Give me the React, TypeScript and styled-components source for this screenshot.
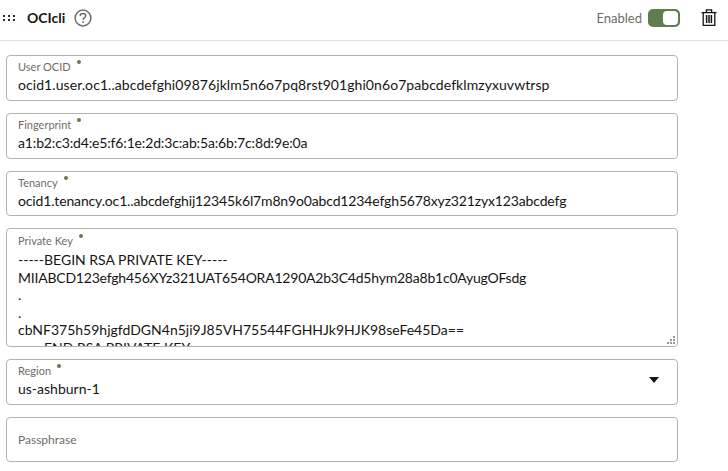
import React from "react";
import styled, { createGlobalStyle } from "styled-components";

const GlobalStyle = createGlobalStyle`
  html, body {
    margin: 0;
    padding: 0;
    background: #fff;
    overflow: hidden;
  }
  body {
    font-family: "Lato", "Noto Sans", sans-serif;
    color: #161513;
  }
`;

const fields = [
  { label: "User OCID", value: "ocid1.user.oc1..abcdefghi09876jklm5n6o7pq8rst901ghi0n6o7pabcdefklmzyxuvwtrsp", track: 0.07 },
  { label: "Fingerprint", value: "a1:b2:c3:d4:e5:f6:1e:2d:3c:ab:5a:6b:7c:8d:9e:0a", track: -0.15 },
  { label: "Tenancy", value: "ocid1.tenancy.oc1..abcdefghij12345k6l7m8n9o0abcd1234efgh5678xyz321zyx123abcdefg", track: -0.15, short: true },
];

const keyLines = [
  { text: "-----BEGIN RSA PRIVATE KEY-----", track: 0 },
  { text: "MIIABCD123efgh456XYz321UAT654ORA1290A2b3C4d5hym28a8b1c0AyugOFsdg", track: -0.22 },
  { text: ".", track: 0 },
  { text: ".", track: 0 },
  { text: "cbNF375h59hjgfdDGN4n5ji9J85VH75544FGHHJk9HJK98seFe45Da==", track: 0 },
  { text: "-----END RSA PRIVATE KEY-----", track: 0 },
];

export default function App() {
  return (
    <Page>
      <GlobalStyle />
      <Header>
        <TitleGroup>
          <Grip width="13" height="6" viewBox="0 0 13 6">
            <rect x="0" y="0" width="2" height="2" />
            <rect x="5" y="0" width="2" height="2" />
            <rect x="10" y="0" width="2" height="2" />
            <rect x="0" y="4" width="2" height="2" />
            <rect x="5" y="4" width="2" height="2" />
            <rect x="10" y="4" width="2" height="2" />
          </Grip>
          <Title>OCIcli</Title>
          <svg width="18" height="18" viewBox="0 0 18 18" fill="none">
            <circle cx="9" cy="9" r="7.9" stroke="#6f6c68" strokeWidth="1.5" />
            <path d="M6.2 7c0-1.6 1.2-2.6 2.8-2.6 1.5 0 2.7 1 2.7 2.3 0 1.9-2.6 2-2.6 4" stroke="#6f6c68" strokeWidth="1.5" />
            <rect x="8.3" y="12.2" width="1.6" height="1.7" fill="#6f6c68" />
          </svg>
        </TitleGroup>
        <Actions>
          <EnabledLabel>Enabled</EnabledLabel>
          <Toggle>
            <Knob />
          </Toggle>
          <svg width="16" height="17" viewBox="0 0 16 17" fill="none" stroke="#161513" strokeWidth="1.3">
            <path d="M.5 3.6h15" />
            <path d="M5.4 3.4V.8h5.2v2.6" />
            <path d="M2.2 3.6v12.8h11.6V3.6" />
            <path d="M5.6 6v8M8 6v8M10.4 6v8" strokeWidth="1.5" />
          </svg>
        </Actions>
      </Header>
      <Form>
        {fields.map((f) => (
          <Field key={f.label} $short={f.short}>
            <Label>
              {f.label}
              <Required />
            </Label>
            <Value $track={f.track}>{f.value}</Value>
          </Field>
        ))}
        <KeyField>
          <Label>
            Private Key
            <Required />
          </Label>
          <KeyText>
            {keyLines.map((line, i) => (
              <KeyLine key={i} $track={line.track}>{line.text}</KeyLine>
            ))}
          </KeyText>
          <Resizer width="10" height="10" viewBox="0 0 10 10" fill="#9b9893">
            <rect x="7" y="1" width="2" height="2" />
            <rect x="4" y="4" width="2" height="2" />
            <rect x="7" y="4" width="2" height="2" />
            <rect x="1" y="7" width="2" height="2" />
            <rect x="4" y="7" width="2" height="2" />
            <rect x="7" y="7" width="2" height="2" />
          </Resizer>
        </KeyField>
        <SelectField>
          <SelectText>
            <Label>
              Region
              <Required />
            </Label>
            <Value>us-ashburn-1</Value>
          </SelectText>
          <Caret />
        </SelectField>
        <EmptyField $short>
          <Placeholder>Passphrase</Placeholder>
        </EmptyField>
      </Form>
    </Page>
  );
}

const Page = styled.div`
  width: 728px;
  height: 471px;
  overflow: hidden;
`;

const Header = styled.header`
  height: 41px;
  box-sizing: border-box;
  border-bottom: 1px solid #e0dfdb;
  display: flex;
  align-items: center;
  justify-content: space-between;
  padding: 0 11px 5px 3px;
`;

const TitleGroup = styled.div`
  display: flex;
  align-items: center;
`;

const Grip = styled.svg`
  fill: #312d2a;
  margin-right: 11px;
`;

const Title = styled.h1`
  margin: 0 9px 0 0;
  font-size: 14px;
  font-weight: 700;
  line-height: 20px;
`;

const Actions = styled.div`
  display: flex;
  align-items: center;
`;

const EnabledLabel = styled.span`
  font-size: 13px;
  color: #6f6c68;
  margin-right: 6px;
`;

const Toggle = styled.div`
  width: 32px;
  height: 18px;
  box-sizing: border-box;
  background: #5f7d4f;
  border-radius: 5px;
  padding: 2px;
  display: flex;
  justify-content: flex-end;
  margin-right: 21px;
`;

const Knob = styled.div`
  width: 15px;
  height: 14px;
  background: #fff;
  border-radius: 4px;
`;

const Form = styled.div`
  display: flex;
  flex-direction: column;
  gap: 12px;
  padding: 14px 50px 0 6px;
`;

const Field = styled.div<{ $short?: boolean }>`
  height: ${(p) => (p.$short ? 45 : 46)}px;
  box-sizing: border-box;
  border: 1px solid #b5b3b0;
  border-radius: 4px;
  padding: 4px 11px 0;
  background: #fff;
`;

const Label = styled.div`
  font-size: 11px;
  line-height: 14px;
  color: #6f6c68;
  display: flex;
`;

const Required = styled.span`
  width: 4px;
  height: 4px;
  border-radius: 50%;
  background: #5f7d4f;
  margin: 0 0 0 6px;
`;

const Value = styled.div<{ $track?: number }>`
  font-size: 14px;
  line-height: 20px;
  margin-top: 1px;
  white-space: nowrap;
  letter-spacing: ${(p) => p.$track ?? 0}px;
`;

const KeyField = styled(Field)`
  height: 119px;
  overflow: hidden;
  position: relative;
  padding-top: 5px;
`;

const KeyText = styled.div`
  margin-top: 3px;
`;

const KeyLine = styled.div<{ $track: number }>`
  font-size: 14px;
  line-height: 17.6px;
  white-space: nowrap;
  letter-spacing: ${(p) => p.$track}px;
`;

const Resizer = styled.svg`
  position: absolute;
  right: 1px;
  bottom: 1px;
`;

const SelectField = styled(Field)`
  display: flex;
  align-items: center;
  justify-content: space-between;
  padding: 0 17px 0 11px;
`;

const SelectText = styled.div`
  margin-top: -1px;
`;

const Caret = styled.span`
  width: 0;
  height: 0;
  border-left: 5px solid transparent;
  border-right: 5px solid transparent;
  border-top: 6px solid #161513;
  margin: -4px 1px 0 0;
`;

const EmptyField = styled(Field)`
  display: flex;
  align-items: center;
  padding: 0 11px;
`;

const Placeholder = styled.span`
  font-size: 12px;
  color: #6f6c68;
`;
